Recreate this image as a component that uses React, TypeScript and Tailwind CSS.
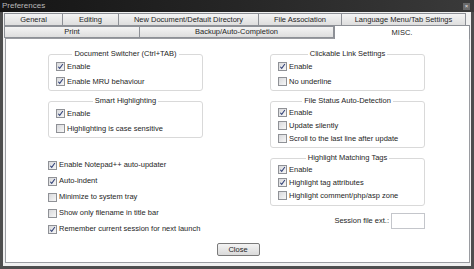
import type { ReactNode } from "react";

const font = { fontFamily: '"Liberation Sans", Arial, sans-serif' };

function Check({ on }: { on?: boolean }) {
  return (
    <span className="flex h-[9px] w-[9px] shrink-0 items-center justify-center border border-[#8f9196] bg-linear-to-br from-[#d8d9dc] to-[#f7f7f7]">
      {on && (
        <svg viewBox="0 0 8 8" className="h-[7px] w-[7px]">
          <path d="M1.4 4.3 L3.1 6.2 L6.7 1.2" fill="none" stroke="#34447a" strokeWidth="1.2" />
        </svg>
      )}
    </span>
  );
}

function Row({ label, on, h = "h-[15px]" }: { label: string; on?: boolean; h?: string }) {
  return (
    <div className={`flex ${h} items-center gap-[2px]`}>
      <Check on={on} />
      <span className="whitespace-nowrap">{label}</span>
    </div>
  );
}

function Group({ title, children, pb = "pb-[1px]" }: { title: string; children: ReactNode; pb?: string }) {
  return (
    <fieldset className={`rounded-[3px] border border-[#d9d9d9] px-[7px] ${pb}`}>
      <legend className="mx-auto px-[2px] leading-[10px] whitespace-nowrap">{title}</legend>
      {children}
    </fieldset>
  );
}

function Tab({ label, w }: { label: string; w: string }) {
  return (
    <div
      className={`${w} flex items-center justify-center border border-l-0 border-[#8d9096] bg-linear-to-b from-[#f4f4f4] to-[#dedede] first:border-l`}
    >
      {label}
    </div>
  );
}

export default function App() {
  return (
    <div
      style={font}
      className="flex h-[269px] w-[474px] flex-col overflow-hidden bg-[#4e4e4e] text-[7.5px] text-[#1e1e1e]"
    >
      {/* title bar */}
      <div className="flex h-[12px] shrink-0 items-center justify-between bg-linear-to-r from-[#151515] via-[#262626] to-[#3a3a3a] pl-[2px] pr-[4px]">
        <span className="text-[8px] text-[#b9b9b9]">Preferences</span>
        <span className="flex h-[7px] w-[7px] items-center justify-center bg-[#6a6a6a] text-[6px] leading-none text-[#e6e6e6]">
          ×
        </span>
      </div>

      <div className="mx-[3px] flex flex-1 flex-col bg-[#f0f0f0] pt-[1px] pb-[3px]">
        {/* tabs row 1 */}
        <div className="flex h-[13px] pl-[1px]">
          <Tab label="General" w="w-[59px]" />
          <Tab label="Editing" w="w-[56px]" />
          <Tab label="New Document/Default Directory" w="w-[140px]" />
          <Tab label="File Association" w="w-[83px]" />
          <Tab label="Language Menu/Tab Settings" w="w-[124px]" />
        </div>
        {/* tabs row 2 */}
        <div className="flex h-[12px] pl-[1px]">
          <Tab label="Print" w="w-[136px]" />
          <Tab label="Backup/Auto-Completion" w="w-[194px]" />
          <div className="relative z-10 -mt-[1px] flex h-[14px] w-[136px] items-center justify-center border border-b-0 border-[#8d9096] bg-white">
            MISC.
          </div>
        </div>

        {/* content */}
        <div className="ml-[2px] mr-[1px] flex flex-1 flex-col border border-[#9a9ca1] bg-white pl-[42px] pt-[10px] pb-[6px]">
          <div className="flex gap-[67px]">
            <div className="flex w-[155px] flex-col">
              <Group title="Document Switcher (Ctrl+TAB)">
                <Row label="Enable" on />
                <Row label="Enable MRU behaviour" on />
              </Group>
              <div className="mt-[5px]">
                <Group title="Smart Highlighting">
                  <Row label="Enable" on />
                  <Row label="Highlighting is case sensitive" />
                </Group>
              </div>
              <div className="mt-[19px] flex flex-col">
                <Row h="h-[16px]" label="Enable Notepad++ auto-updater" on />
                <Row h="h-[16px]" label="Auto-indent" on />
                <Row h="h-[16px]" label="Minimize to system tray" />
                <Row h="h-[16px]" label="Show only filename in title bar" />
                <Row h="h-[16px]" label="Remember current session for next launch" on />
              </div>
            </div>

            <div className="flex w-[155px] flex-col">
              <Group title="Clickable Link Settings">
                <Row label="Enable" on />
                <Row label="No underline" />
              </Group>
              <div className="mt-[5px]">
                <Group title="File Status Auto-Detection" pb="pb-[2px]">
                  <Row h="h-[13px]" label="Enable" on />
                  <Row h="h-[13px]" label="Update silently" />
                  <Row h="h-[13px]" label="Scroll to the last line after update" />
                </Group>
              </div>
              <div className="mt-[5px]">
                <Group title="Highlight Matching Tags" pb="pb-[3px]">
                  <Row h="h-[13px]" label="Enable" on />
                  <Row h="h-[13px]" label="Highlight tag attributes" on />
                  <Row h="h-[13px]" label="Highlight comment/php/asp zone" />
                </Group>
              </div>
              <div className="mt-[7px] flex h-[16px] items-center justify-end gap-[2px]">
                <span>Session file ext.:</span>
                <div className="h-[16px] w-[34px] border border-[#c4c6cb] bg-white" />
              </div>
            </div>
          </div>

          <div className="mt-auto flex justify-center pr-[41px]">
            <button className="h-[13px] w-[43px] rounded-[2px] border border-[#7a7a7a] bg-linear-to-b from-[#f3f3f3] to-[#dadada] leading-none">
              Close
            </button>
          </div>
        </div>
      </div>
      <div className="h-[3px] shrink-0" />
    </div>
  );
}
